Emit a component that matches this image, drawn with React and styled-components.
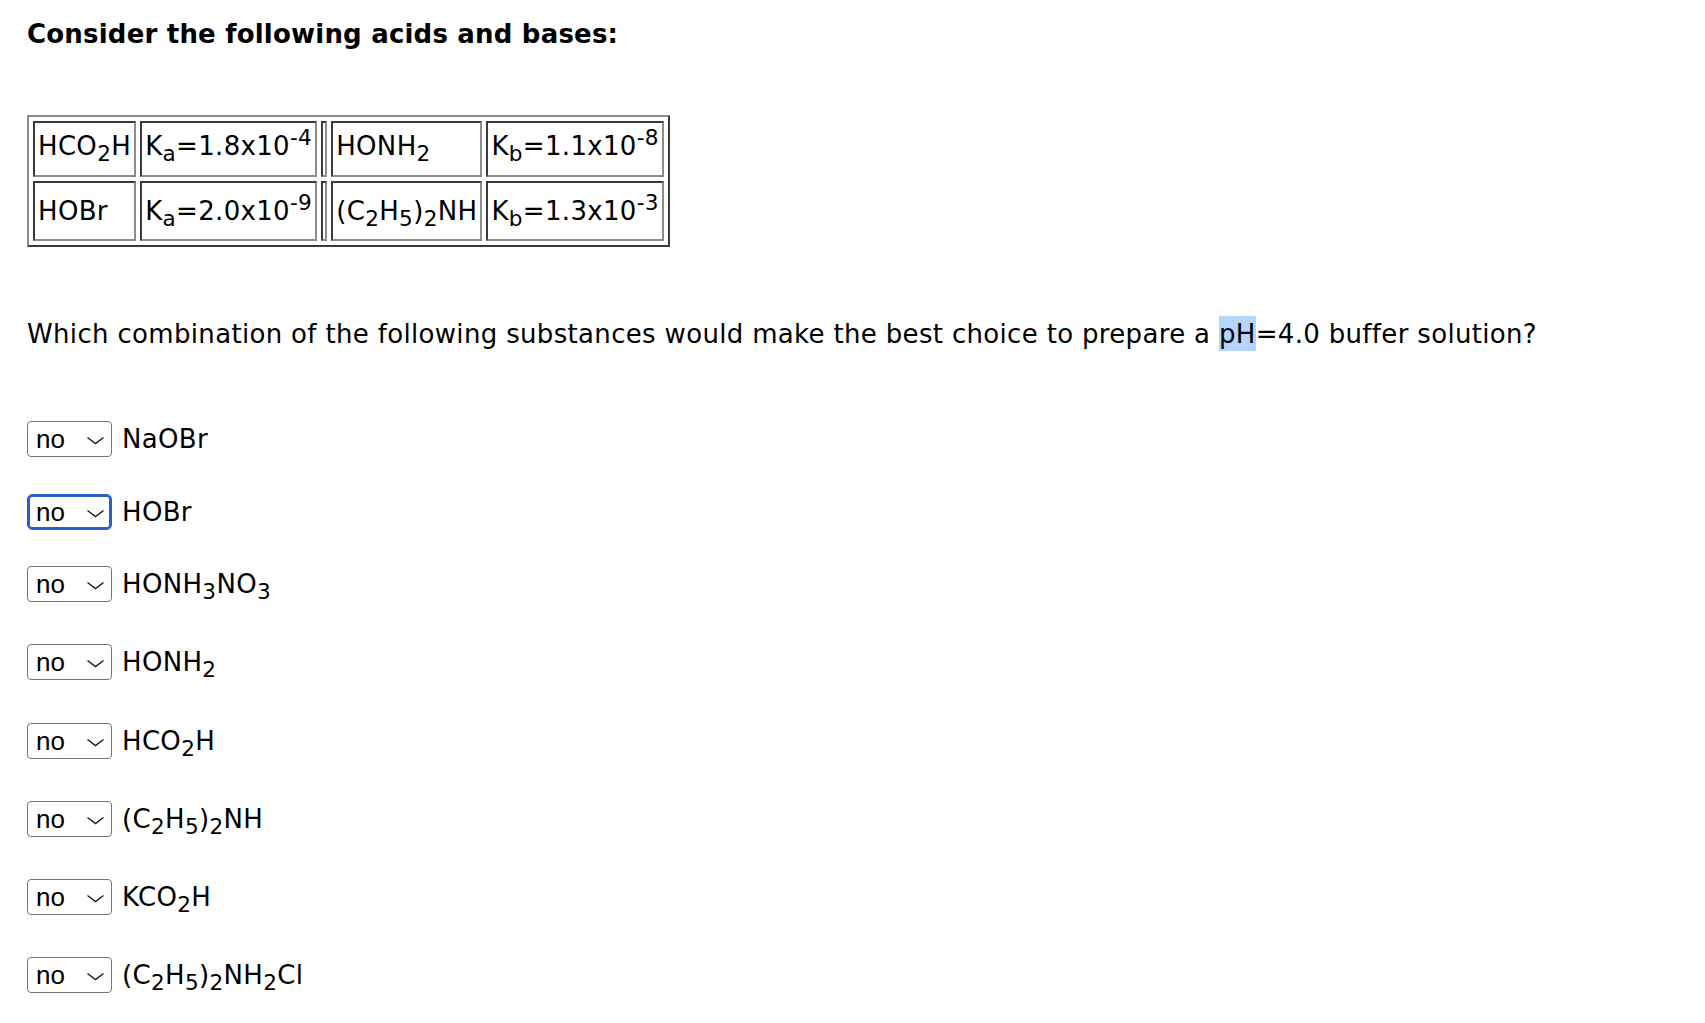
import React from "react";
import styled, { createGlobalStyle } from "styled-components";

const constants = [
  ["HCO_{2}H", "K_{a}=1.8x10^{-4}", "HONH_{2}", "K_{b}=1.1x10^{-8}"],
  ["HOBr", "K_{a}=2.0x10^{-9}", "(C_{2}H_{5})_{2}NH", "K_{b}=1.3x10^{-3}"],
];

const rowMetrics = [
  { h: 56, top: 8 },
  { h: 60, top: 13 },
];

const substances = [
  "NaOBr",
  "HOBr",
  "HONH_{3}NO_{3}",
  "HONH_{2}",
  "HCO_{2}H",
  "(C_{2}H_{5})_{2}NH",
  "KCO_{2}H",
  "(C_{2}H_{5})_{2}NH_{2}Cl",
];

// "_{x}" -> subscript, "^{x}" -> superscript
function Chem({ f }) {
  const parts = f.split(/(_\{[^}]+\}|\^\{[^}]+\})/).filter(Boolean);
  return parts.map((p, i) => {
    if (p.startsWith("_{")) return <Sub key={i}>{p.slice(2, -1)}</Sub>;
    if (p.startsWith("^{")) return <Sup key={i}>{p.slice(2, -1)}</Sup>;
    return <React.Fragment key={i}>{p}</React.Fragment>;
  });
}

function Choice({ formula, focused }) {
  return (
    <Row $sub={formula.includes("_")}>
      <SelectWrap>
        <Select defaultValue="no" $focused={focused}>
          <option value="no">no</option>
          <option value="yes">yes</option>
        </Select>
        <Chevron viewBox="0 0 19 9">
          <path d="M1.5 1.5 L9.5 7.5 L17.5 1.5" />
        </Chevron>
      </SelectWrap>
      <Label>
        <Chem f={formula} />
      </Label>
    </Row>
  );
}

export default function App() {
  return (
    <>
      <GlobalStyle />
      <Page>
        <Title>Consider the following acids and bases:</Title>
        <DataTable>
          <tbody>
            {constants.map((row, r) => (
              <TRow key={r} $h={rowMetrics[r].h} $top={rowMetrics[r].top}>
                <Cell>
                  <Chem f={row[0]} />
                </Cell>
                <Cell>
                  <Chem f={row[1]} />
                </Cell>
                <Cell $spacer />
                <Cell>
                  <Chem f={row[2]} />
                </Cell>
                <Cell>
                  <Chem f={row[3]} />
                </Cell>
              </TRow>
            ))}
          </tbody>
        </DataTable>
        <Question>
          Which combination of the following substances would make the best
          choice to prepare a <Highlight>pH</Highlight>=4.0 buffer solution?
        </Question>
        <Choices>
          {substances.map((s, i) => (
            <Choice key={s} formula={s} focused={i === 1} />
          ))}
        </Choices>
      </Page>
    </>
  );
}

const GlobalStyle = createGlobalStyle`
  body {
    margin: 0;
    background: #fff;
    color: #000;
    font-family: "DejaVu Sans", Verdana, sans-serif;
  }
`;

const Page = styled.main`
  padding: 19px 27px 16px;
  font-size: 26px;
  letter-spacing: 0.33px;
`;

const Title = styled.h1`
  margin: 0;
  font-size: 26px;
  font-weight: bold;
  line-height: 30px;
  letter-spacing: 0.2px;
`;

const DataTable = styled.table`
  margin-top: 66px;
  border-collapse: separate;
  border-spacing: 4px;
  border: 2px solid;
  border-color: #8c8c8c #3a3a3a #3a3a3a #8c8c8c;
  font-size: 26px;
  line-height: 30px;
`;

const TRow = styled.tr`
  & > td {
    height: ${(p) => p.$h}px;
    padding-top: ${(p) => p.$top}px;
  }
`;

const Cell = styled.td`
  box-sizing: border-box;
  border: 2px solid;
  border-color: #3a3a3a #8c8c8c #8c8c8c #3a3a3a;
  padding: 0 ${(p) => (p.$spacer ? 1 : 3)}px;
  vertical-align: top;
  white-space: nowrap;
`;

const Sub = styled.sub`
  font-size: 0.83em;
  vertical-align: -6px;
  line-height: 0;
`;

const Sup = styled.sup`
  font-size: 0.83em;
  vertical-align: 10px;
  line-height: 0;
`;

const Question = styled.p`
  margin: 72px 0 0;
  line-height: 30px;
`;

const Highlight = styled.span`
  background: #b4d5fe;
  padding: 3px 0 2px;
`;

const Choices = styled.div`
  margin-top: 72px;
`;

const Row = styled.div`
  display: flex;
  align-items: baseline;
  gap: 10px;
  margin-bottom: ${(p) => (p.$sub ? 42.3 : 36.5)}px;

  &:last-child {
    margin-bottom: 0;
  }
`;

const SelectWrap = styled.span`
  position: relative;
  display: inline-flex;
  letter-spacing: 0;
`;

const Select = styled.select`
  appearance: none;
  box-sizing: border-box;
  width: 85px;
  height: 36px;
  margin: 0;
  padding: 0 0 0 8px;
  font: 26px "Liberation Sans", Arial, sans-serif;
  color: #000;
  background: #fff;
  border: 1px solid ${(p) => (p.$focused ? "#2a5fce" : "#767676")};
  border-radius: ${(p) => (p.$focused ? 5 : 4)}px;
  box-shadow: ${(p) => (p.$focused ? "inset 0 0 0 2px #2a5fce" : "none")};
  outline: none;
`;

const Chevron = styled.svg`
  position: absolute;
  left: 59px;
  top: 15px;
  width: 19px;
  height: 9px;
  pointer-events: none;
  fill: none;
  stroke: #1a1a1a;
  stroke-width: 1.4;
`;

const Label = styled.span`
  font-size: 26px;
  line-height: 30px;
`;
